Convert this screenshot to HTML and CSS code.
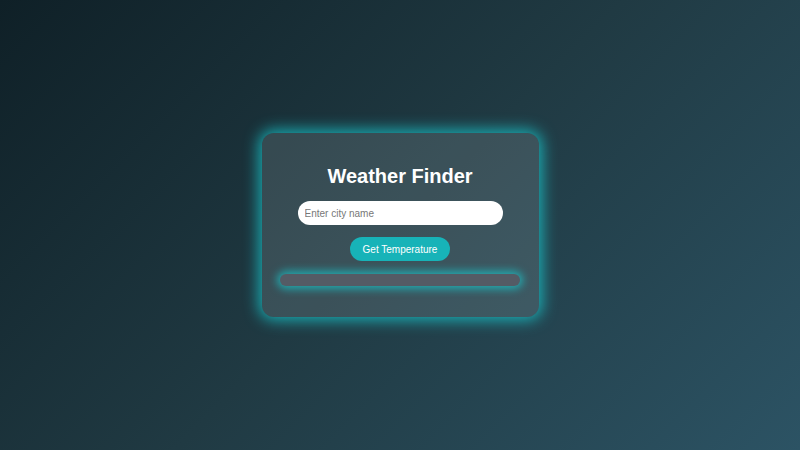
FILE: index.html
```html
<!DOCTYPE html>
<html lang="en">
<head>
<meta charset="utf-8">
<title>Weather Finder</title>
<link rel="stylesheet" href="styles.css">
</head>
<body>
<main class="page">
  <section class="card">
    <h1 class="title">Weather Finder</h1>
    <input class="city-input" type="text" placeholder="Enter city name">
    <button class="get-btn" type="button">Get Temperature</button>
    <div class="result"></div>
  </section>
</main>
</body>
</html>
```
FILE: styles.css
```css
html, body {
  margin: 0;
  padding: 0;
  height: 100%;
}
body {
  font-family: "Liberation Sans", Arial, sans-serif;
  background: linear-gradient(135deg, #0f2027 0%, #203a43 50%, #2c5364 100%);
  color: #fff;
}
.page {
  height: 450px;
  display: flex;
  align-items: center;
  justify-content: center;
}
.card {
  box-sizing: border-box;
  width: 277px;
  height: 184px;
  padding: 32px 18px 0;
  border-radius: 12px;
  background: rgba(255, 255, 255, 0.12);
  box-shadow: 0 0 15px 3px rgba(24, 205, 210, 0.8);
  display: flex;
  flex-direction: column;
  align-items: center;
}
.title {
  margin: 0;
  font-size: 20px;
  line-height: 23px;
  font-weight: bold;
  color: #fff;
}
.city-input {
  box-sizing: border-box;
  margin-top: 13px;
  width: 205px;
  height: 24px;
  border: none;
  border-radius: 12px;
  padding: 0 7px;
  font-family: "Liberation Sans", Arial, sans-serif;
  font-size: 10px;
  background: #fff;
  color: #333;
  outline: none;
}
.city-input::placeholder {
  color: #777;
}
.get-btn {
  margin-top: 12px;
  width: 100px;
  height: 24px;
  border: none;
  border-radius: 12px;
  background: #17b3b8;
  color: #fff;
  font-family: "Liberation Sans", Arial, sans-serif;
  font-size: 10px;
  padding: 0;
}
.result {
  margin-top: 13px;
  width: 240px;
  height: 12px;
  border-radius: 6px;
  background: #545b65;
  box-shadow: 0 0 9px 3px rgba(24, 205, 210, 0.7);
}
```
